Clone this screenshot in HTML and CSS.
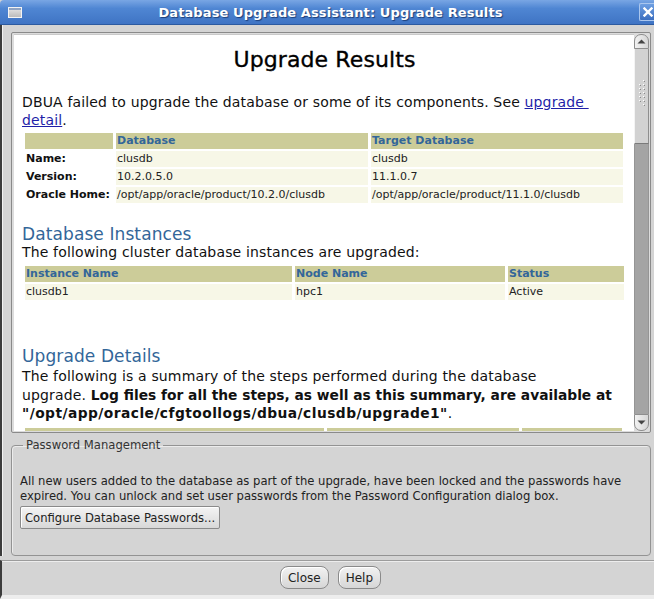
FILE: index.html
```html
<!DOCTYPE html>
<html>
<head>
<meta charset="utf-8">
<link rel="stylesheet" href="styles.css">
</head>
<body>
<div class="window">
  <div class="titlebar">
    <span class="ticon"></span>
    <span class="ttext">Database Upgrade Assistant: Upgrade Results</span>
    <span class="tclose"><svg width="10" height="10" viewBox="0 0 10 10"><path d="M1.5 1.5 L8.5 8.5 M8.5 1.5 L1.5 8.5" stroke="#fff" stroke-width="2.4" stroke-linecap="square"/></svg></span>
  </div>
  <div class="body">
    <div class="panel">
      <div class="view">
        <div class="doc">
          <h1 class="title">Upgrade Results</h1>
          <p class="intro">DBUA failed to upgrade the database or some of its components. See <a href="#" class="link">upgrade&nbsp;</a><br><a href="#" class="link">detail</a>.</p>
          <table class="grid t1">
            <tr><th class="c1"></th><th class="c2">Database</th><th class="c3">Target Database</th></tr>
            <tr><td class="lbl">Name:</td><td>clusdb</td><td>clusdb</td></tr>
            <tr><td class="lbl">Version:</td><td>10.2.0.5.0</td><td>11.1.0.7</td></tr>
            <tr><td class="lbl">Oracle Home:</td><td>/opt/app/oracle/product/10.2.0/clusdb</td><td>/opt/app/oracle/product/11.1.0/clusdb</td></tr>
          </table>
          <h2 class="sect">Database Instances</h2>
          <p class="txt">The following cluster database instances are upgraded:</p>
          <table class="grid t2">
            <tr><th class="i1">Instance Name</th><th class="i2">Node Name</th><th class="i3">Status</th></tr>
            <tr><td>clusdb1</td><td>hpc1</td><td>Active</td></tr>
          </table>
          <h2 class="sect sect-details">Upgrade Details</h2>
          <p class="txt details">The following is a summary of the steps performed during the database<br>upgrade. <b>Log files for all the steps, as well as this summary, are available at<br><span class="path">"/opt/app/oracle/cfgtoollogs/dbua/clusdb/upgrade1"</span></b>.</p>
          <table class="grid t3">
            <tr><th class="s1">&nbsp;</th><th class="s2">&nbsp;</th><th class="s3">&nbsp;</th></tr>
          </table>
        </div>
      </div>
      <div class="vscroll">
        <div class="sb-up"><svg width="9" height="5" viewBox="0 0 9 5"><path d="M0.5 4.5 L4.5 0.5 L8.5 4.5 Z" fill="#444"/></svg></div>
        <div class="sb-thumb">
          <svg class="grip" width="8" height="28" viewBox="0 0 8 28">
            <g fill="#8a8a8a">
              <rect x="6" y="1" width="1" height="1"/><rect x="2" y="5" width="1" height="1"/><rect x="6" y="9" width="1" height="1"/><rect x="2" y="13" width="1" height="1"/><rect x="6" y="17" width="1" height="1"/><rect x="2" y="21" width="1" height="1"/><rect x="6" y="25" width="1" height="1"/>
              <rect x="6" y="5" width="1" height="1"/><rect x="2" y="9" width="1" height="1"/><rect x="6" y="13" width="1" height="1"/><rect x="2" y="17" width="1" height="1"/><rect x="6" y="21" width="1" height="1"/>
            </g>
            <g fill="#ffffff">
              <rect x="5" y="0" width="1" height="1"/><rect x="1" y="4" width="1" height="1"/><rect x="5" y="8" width="1" height="1"/><rect x="1" y="12" width="1" height="1"/><rect x="5" y="16" width="1" height="1"/><rect x="1" y="20" width="1" height="1"/><rect x="5" y="24" width="1" height="1"/>
              <rect x="5" y="4" width="1" height="1"/><rect x="1" y="8" width="1" height="1"/><rect x="5" y="12" width="1" height="1"/><rect x="1" y="16" width="1" height="1"/><rect x="5" y="20" width="1" height="1"/>
            </g>
          </svg>
        </div>
        <div class="sb-track"></div>
        <div class="sb-down"><svg width="9" height="5" viewBox="0 0 9 5"><path d="M0.5 0.5 L4.5 4.5 L8.5 0.5 Z" fill="#444"/></svg></div>
      </div>
    </div>
    <fieldset class="group">
      <legend class="legend">Password Management</legend>
      <p class="gtext">All new users added to the database as part of the upgrade, have been locked and the passwords have<br>expired. You can unlock and set user passwords from the Password Configuration dialog box.</p>
      <button class="btn">Configure Database Passwords...</button>
    </fieldset>
  </div>
  <div class="footer">
    <button class="pill">Close</button>
    <button class="pill">Help</button>
  </div>
</div>
</body>
</html>
```
FILE: styles.css
```css
html, body {
  margin: 0;
  padding: 0;
  background: #d4d4d4;
}
.window {
  width: 654px;
  height: 599px;
  display: flex;
  flex-direction: column;
  background: #d4d4d4;
  box-sizing: border-box;
  overflow: hidden;
  font-family: "DejaVu Sans", sans-serif;
}
.titlebar {
  height: 25px;
  flex: none;
  display: flex;
  align-items: center;
  background: linear-gradient(#79a6e4 0%, #4f86d3 35%, #3f74c4 100%);
  border-top-left-radius: 4px;
  border-bottom: 1px solid #2c5aa0;
  box-sizing: border-box;
}
.ticon {
  width: 12px;
  height: 9px;
  margin-left: 8px;
  border: 1px solid #f4f4f4;
  background: linear-gradient(#e6e6e6, #bcbcbc);
  box-shadow: inset 0 2px 0 #8fa3c2;
  flex: none;
}
.ttext {
  flex: 1;
  text-align: center;
  color: #ffffff;
  font-weight: bold;
  font-size: 13px;
  text-shadow: 1px 1px 1px #1d3f78;
  padding-left: 0;
  letter-spacing: 0.1px;
}
.tclose {
  width: 15px;
  height: 16px;
  margin-right: -1px;
  flex: none;
  display: flex;
  align-items: center;
  justify-content: center;
  background: linear-gradient(#6e9fe2, #3c6fc0);
  border: 1px solid #aac6ee;
  border-right: none;
  border-radius: 2px 0 0 2px;
}
.body {
  flex: none;
  display: flex;
  flex-direction: column;
  padding: 7px 3px 0 9px;
  border-left: 2px solid #3c3c3c;
  box-shadow: inset 1px 0 0 #f2f2f2;
}
.panel {
  height: 401px;
  box-sizing: border-box;
  border: 1px solid #8a8a8a;
  border-radius: 2px;
  background: #dcdcdc;
  padding: 1px 1px 1px 2px;
  display: flex;
}
.view {
  flex: 1;
  background: #ffffff;
  overflow: hidden;
  border-top: 1px solid #c9c9c9;
}
.doc {
  padding: 0 7px 0 8px;
  color: #111;
}
.title {
  margin: 12px 0 0 0;
  text-align: center;
  font-size: 22px;
  line-height: 26px;
  font-weight: normal;
  -webkit-text-stroke: 0.35px #000;
  color: #000;
  letter-spacing: 0.1px;
}
.intro {
  margin: 20px 0 0 0;
  font-size: 14px;
  line-height: 18px;
  letter-spacing: 0.15px;
}
.link {
  color: #1f1fa8;
  text-decoration: underline;
}
.grid {
  width: 100%;
  border-collapse: separate;
  border-spacing: 3px 2px;
  margin: 2px 0 0 0;
  font-size: 11px;
  table-layout: fixed;
}
.grid th, .grid td {
  height: 16px;
  padding: 0 1px;
  line-height: 16px;
  text-align: left;
  white-space: nowrap;
  overflow: hidden;
}
.grid th {
  background: #cccc99;
  color: #336699;
  font-weight: bold;
}
.grid td {
  background: #f7f7e7;
  color: #222;
}
.grid td.lbl {
  background: #ffffff;
  font-weight: bold;
  color: #111;
}
.t1 { width: 603px; }
.c1 { width: 86px; }
.c2 { width: 250px; }
.c3 { width: 250px; }
.sect {
  margin: 20px 0 0 0;
  font-size: 17px;
  line-height: 18px;
  font-weight: normal;
  color: #336699;
  letter-spacing: 0.1px;
}
.txt {
  margin: 0;
  font-size: 14px;
  line-height: 18px;
  letter-spacing: 0.15px;
}
.t2 { margin-top: 3px; width: 603px; }
.i1 { width: 265px; }
.i2 { width: 208px; }
.i3 { width: 114px; }
.sect-details { margin-top: 45px; }
.details {
  margin-top: 2px;
  line-height: 18.5px;
  white-space: nowrap;
}
.details b {
  font-weight: bold;
  font-size: 13.8px;
  letter-spacing: 0;
}
.path {
  letter-spacing: 0.45px;
}
.t3 { margin-top: 3px; width: 603px; }
.s1 { width: 296px; }
.s2 { width: 190px; }
.s3 { width: 98px; }
.vscroll {
  width: 15px;
  flex: none;
  display: flex;
  flex-direction: column;
}
.sb-up, .sb-down {
  flex: none;
  display: flex;
  align-items: center;
  justify-content: center;
  background: linear-gradient(90deg, #f2f2f2, #d6d6d6);
  border: 1px solid #8e8e8e;
  box-sizing: border-box;
}
.sb-up {
  height: 15px;
  border-radius: 7px 7px 0 0;
}
.sb-down {
  height: 17px;
  border-radius: 0 0 7px 7px;
}
.sb-thumb {
  height: 95px;
  flex: none;
  box-sizing: border-box;
  background: #d2d2d2;
  border-left: 1px solid #f4f4f4;
  border-right: 1px solid #8e8e8e;
  border-bottom: 1px solid #7a7a7a;
  display: flex;
  justify-content: center;
  padding-top: 31px;
}
.grip { display: block; }
.sb-track {
  flex: 1;
  background: #a4a4a4;
  border-left: 1px solid #959595;
  border-right: 1px solid #959595;
}
.group {
  margin: 5px 0 0 0;
  padding: 22px 8px 26px 8px;
  border: 1px solid #939393;
  border-radius: 4px;
  box-shadow: inset 1px 1px 0 #ececec;
  min-width: 0;
  font-size: 11.6px;
  color: #222;
}
.legend {
  padding: 0 3px;
  margin-left: 3px;
  line-height: 14px;
  font-size: 11.6px;
  color: #333;
}
.gtext {
  margin: 0;
  line-height: 15px;
  white-space: nowrap;
}
.btn {
  display: block;
  margin-top: 2px;
  height: 23px;
  padding: 0 4px;
  font-family: "DejaVu Sans", sans-serif;
  font-size: 11.6px;
  color: #222;
  background: linear-gradient(#f4f4f4, #d8d8d8);
  border: 1px solid #8a8a8a;
  border-radius: 2px;
  box-shadow: inset 1px 1px 0 #ffffff;
}
.footer {
  margin-top: 4px;
  flex: 1;
  display: flex;
  justify-content: center;
  align-items: flex-start;
  gap: 9px;
  padding: 5px 0 0 5px;
  border-top: 1px solid #9c9c9c;
  box-shadow: inset 0 1px 0 #ededed;
  border-left: 2px solid #3c3c3c;
  border-bottom: 4px solid #ededed;
}
.pill {
  height: 23px;
  padding: 0 7px;
  font-family: "DejaVu Sans", sans-serif;
  font-size: 12px;
  color: #222;
  background: linear-gradient(#f2f2f2, #d6d6d6);
  border: 1px solid #8a8a8a;
  border-radius: 8px;
  box-shadow: inset 1px 1px 0 #ffffff;
}
```
